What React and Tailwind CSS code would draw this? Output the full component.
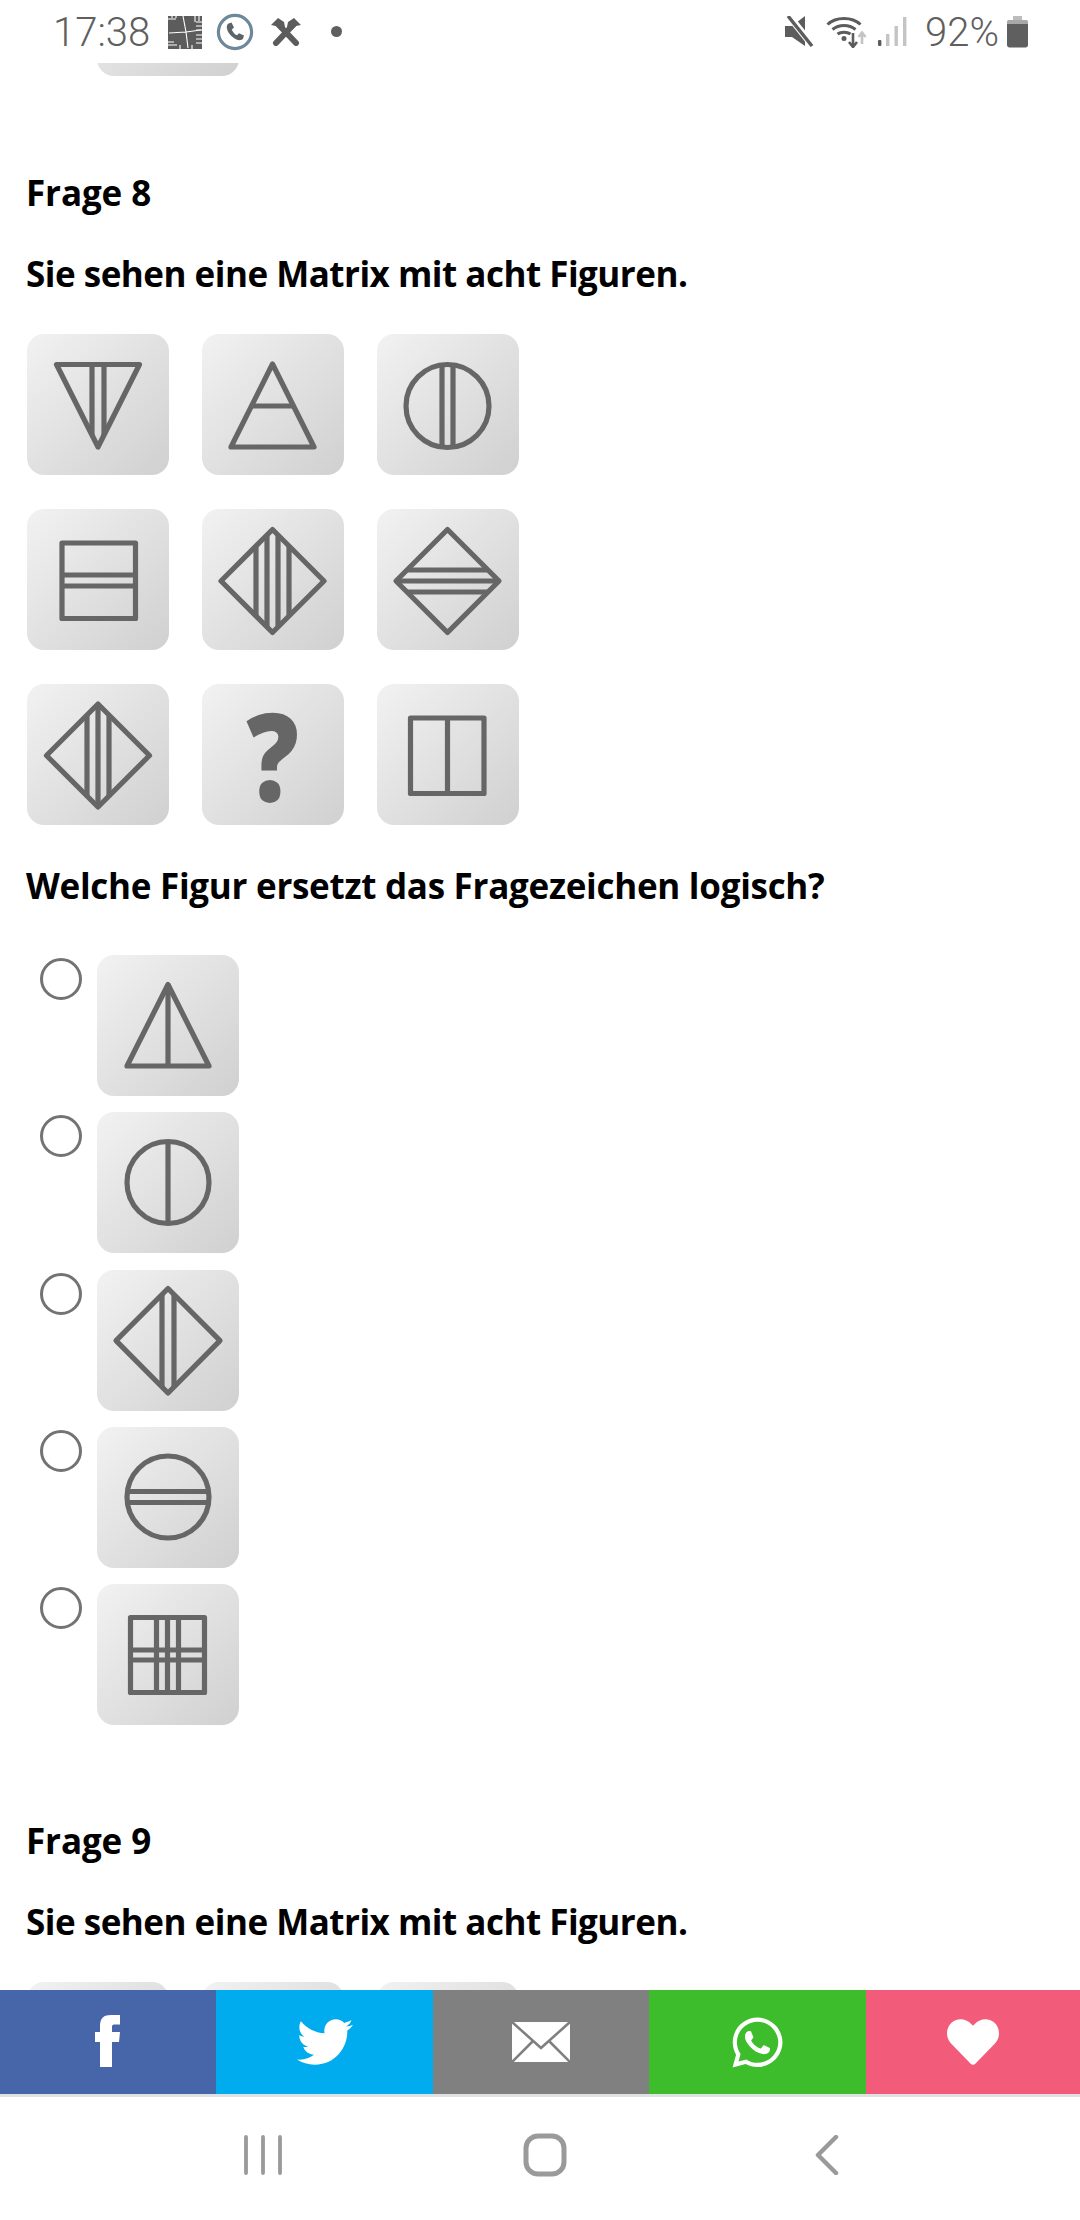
import React from "react";
import { FaTwitter, FaWhatsapp, FaHeart } from "react-icons/fa";

const S = "#666666";

function Fig({ children }) {
  return (
    <svg viewBox="0 0 142 141" className="block w-full h-full" fill="none" stroke={S} strokeWidth="5.2" strokeLinejoin="round" strokeLinecap="butt">
      {children}
    </svg>
  );
}

function Tile({ children }) {
  return (
    <div className="w-[142px] h-[141px] shrink-0 rounded-[17px] bg-linear-to-br from-[#f2f2f2] to-[#d0d0d0]">
      {children}
    </div>
  );
}

const figs = {
  triDown: (
    <Fig>
      <path d="M29.5 30.5H112.5L71 113Z" />
      <path d="M65 30.5V101M77 30.5V101" />
    </Fig>
  ),
  triUpBar: (
    <Fig>
      <path d="M70.5 30L112 113H29Z" />
      <path d="M50 72H91" />
    </Fig>
  ),
  circleTwoV: (
    <Fig>
      <circle cx="70.5" cy="72" r="41.5" />
      <path d="M65 31V113M76 31V113" />
    </Fig>
  ),
  rectTwoH: (
    <Fig>
      <path d="M35 34H108.5V109.5H35Z" />
      <path d="M35 66H108.5M35 77H108.5" />
    </Fig>
  ),
  diamondFourV: (
    <Fig>
      <path d="M70.5 20.5L122 72L70.5 123.5L19 72Z" />
      <path d="M54 37V107M65 26V118M76 26V118M87 37V107" />
    </Fig>
  ),
  diamondThreeH: (
    <Fig>
      <path d="M70.5 20.5L122 72L70.5 123.5L19 72Z" />
      <path d="M30 61H111M19 72H122M30 83H111" />
    </Fig>
  ),
  diamondThreeV: (
    <Fig>
      <path d="M71 20L122.5 71.5L71 123L19.5 71.5Z" />
      <path d="M60 31V112M71 20V123M82 31V112" />
    </Fig>
  ),
  rectOneV: (
    <Fig>
      <path d="M33.5 34H107V109.5H33.5Z" />
      <path d="M70.5 34V109.5" />
    </Fig>
  ),
  triUpV: (
    <Fig>
      <path d="M71 29.5L112 111H30Z" />
      <path d="M71 29.5V111" />
    </Fig>
  ),
  circleOneV: (
    <Fig>
      <circle cx="71" cy="70.5" r="41" />
      <path d="M71 30V111" />
    </Fig>
  ),
  diamondTwoV: (
    <Fig>
      <path d="M71 18.5L123 70.7L71 123L19 70.7Z" />
      <path d="M65 25V117M77 25V117" />
    </Fig>
  ),
  circleTwoH: (
    <Fig>
      <circle cx="71" cy="70" r="41" />
      <path d="M32 64.5H110M32 75.5H110" />
    </Fig>
  ),
  grid: (
    <Fig>
      <path d="M33.5 33.5H107.5V108.5H33.5Z" />
      <path d="M59.5 33.5V108.5M70.5 33.5V108.5M81.5 33.5V108.5M33.5 66H107.5M33.5 76H107.5" />
    </Fig>
  ),
};

function Question() {
  return (
    <div className="w-[142px] h-[141px] flex items-center justify-center">
      <span className="font-['Open_Sans',sans-serif] font-extrabold text-[122px] leading-none text-[#666666] scale-x-[0.85]">?</span>
    </div>
  );
}

function Heading({ children, className = "" }) {
  return (
    <p className={`-ml-[1px] font-['Open_Sans',sans-serif] font-bold text-[35px] leading-[40px] text-black ${className}`}>
      {children}
    </p>
  );
}

function Option({ fig }) {
  return (
    <div className="flex items-start gap-[15px] pl-[40px]">
      <span className="mt-[3px] w-[42px] h-[42px] rounded-full border-[3px] border-[#737373] bg-white shrink-0" />
      <Tile>{fig}</Tile>
    </div>
  );
}

function StatusLeft() {
  return (
    <div className="flex items-center">
      <span className="pt-[2px] font-['Roboto',sans-serif] font-light text-[40px] leading-none text-[#5f5f5f] w-[115px]">17:38</span>
      <svg width="34" height="34" viewBox="0 0 34 34" className="shrink-0">
        <rect x="0" y="1" width="34" height="33" fill="#5c5c5c" />
        <path d="M0 4H8M0 27H6M0 30H9M27 0V7M31 0V6M12 30V34M24 30V34M28 7H34M28 11H34M28 15H34M28 20H34M28 24H34M28 28H34M4 0V3M8 0V3" stroke="#ffffff" strokeWidth="1.1" />
        <path d="M15 1L18 17L20 33M1 18L18 17L33 15" stroke="#ffffff" strokeWidth="1.1" fill="none" />
      </svg>
      <svg width="38" height="38" viewBox="0 0 38 38" className="ml-[14px] shrink-0">
        <circle cx="19" cy="19" r="16.6" fill="none" stroke="#6d8898" strokeWidth="3.2" />
        <path d="M12.5 10.5L15.5 9.5L18 14.5L15.8 16.4C16.6 19 18.6 21.2 21 22.3L23 20.2L28 22.6L27 25.8C25.8 27.4 23 27.6 20.4 26.4C15.6 24.4 11.4 19.4 10.8 14.8C10.6 13 11.2 11.4 12.5 10.5Z" fill="#5c6468" />
      </svg>
      <svg width="30" height="28" viewBox="0 0 30 28" className="ml-[17px] shrink-0">
        <path d="M7 6L25 25M23 6L5 25" stroke="#5c5c5c" strokeWidth="6" strokeLinecap="round" />
        <path d="M0 7L7 0L13 4L14 9L9 12L5 8ZM30 7L23 0L17 4L16 9L21 12L25 8Z" fill="#5c5c5c" />
      </svg>
      <span className="ml-[30px] w-[11px] h-[11px] rounded-full bg-[#5f5f5f] shrink-0" />
    </div>
  );
}

function StatusRight() {
  return (
    <div className="flex items-center">
      <svg width="29" height="31" viewBox="0 0 29 31" className="shrink-0">
        <path d="M0 10H7L20 0V30L7 21H0Z" fill="#5c5c5c" />
        <path d="M4 0L28 30" stroke="#ffffff" strokeWidth="7" />
        <path d="M3 0L27 30" stroke="#5c5c5c" strokeWidth="3.4" />
      </svg>
      <svg width="41" height="32" viewBox="0 0 41 32" className="ml-[12px] shrink-0" fill="none">
        <path d="M1.5 8.5C10 0.5 26 0.5 34.5 8.5" stroke="#5c5c5c" strokeWidth="3" />
        <path d="M6.5 13.5C13 8 23 8 29.5 13.5" stroke="#5c5c5c" strokeWidth="3" />
        <path d="M11.5 18C15 15.5 21 15.5 24.5 18" stroke="#5c5c5c" strokeWidth="3" />
        <circle cx="18" cy="22.5" r="2.5" fill="#5c5c5c" />
        <path d="M27 17V30M23 26L27 31L31 26" stroke="#5c5c5c" strokeWidth="2.6" />
        <path d="M36 28V17M32.5 21L36 16.5L39.5 21" stroke="#c4c4c4" strokeWidth="2.6" />
      </svg>
      <svg width="29" height="30" viewBox="0 0 29 30" className="ml-[11px] shrink-0">
        <rect x="0" y="23" width="3.4" height="6" rx="1" fill="#5c5c5c" />
        <rect x="8" y="17" width="3.4" height="12" fill="#c4c4c4" />
        <rect x="16.5" y="9" width="3.4" height="20" fill="#c4c4c4" />
        <rect x="25" y="0" width="3.4" height="29" fill="#c4c4c4" />
      </svg>
      <span className="ml-[18px] pt-[2px] font-['Roboto',sans-serif] font-light text-[40px] leading-none text-[#5f5f5f] w-[82px]">92%</span>
      <svg width="21" height="32" viewBox="0 0 21 32" className="shrink-0">
        <rect x="6" y="0" width="9" height="5" fill="#bcbcbc" />
        <rect x="0" y="4" width="21" height="5" rx="1.5" fill="#a8a8a8" />
        <path d="M0 8H21V29C21 30.5 20 31.5 18.5 31.5H2.5C1 31.5 0 30.5 0 29Z" fill="#5f5f5f" />
      </svg>
    </div>
  );
}

function Share() {
  return (
    <div className="shrink-0 flex h-[104px]">
      <div className="w-[216px] flex items-center justify-center bg-[#4666a9]">
        <svg width="25" height="52" viewBox="0 0 25 52" fill="#ffffff" className="-mt-[2px] -ml-[2px]">
          <path d="M5 52V27H0V17H5V11C5 3 9 0 16 0H25V9.5H19C17.5 9.5 17 10.5 17 12V17H25L24 27H17V52Z" />
        </svg>
      </div>
      <div className="w-[217px] flex items-center justify-center bg-[#00aced]">
        <FaTwitter size={56} color="#ffffff" />
      </div>
      <div className="w-[216px] flex items-center justify-center bg-[#808080]">
        <svg width="58" height="40" viewBox="0 0 58 40">
          <rect width="58" height="40" fill="#ffffff" />
          <path d="M0 0L29 26L58 0M0 40L21 19M58 40L37 19" fill="none" stroke="#808080" strokeWidth="2.6" />
        </svg>
      </div>
      <div className="w-[217px] flex items-center justify-center bg-[#3dbd2b]">
        <FaWhatsapp size={57} color="#ffffff" />
      </div>
      <div className="w-[214px] flex items-center justify-center bg-[#f25c7a]">
        <FaHeart size={52} color="#ffffff" />
      </div>
    </div>
  );
}

function NavBar() {
  return (
    <div className="h-[126px] shrink-0 bg-white border-t-[3px] border-[#dfe2e2]">
      <div className="grid grid-cols-3 w-[846px] ml-[122px] pt-[38px]">
        <div className="flex justify-center">
          <svg width="40" height="40" viewBox="0 0 40 40" stroke="#9a9a9a" strokeWidth="3.8" strokeLinecap="round">
            <path d="M3 2V38M20 2V38M37 2V38" />
          </svg>
        </div>
        <div className="flex justify-center">
          <svg width="44" height="44" viewBox="0 0 44 44" fill="none" className="-mt-[2px]">
            <rect x="3" y="3" width="38" height="38" rx="12" stroke="#9a9a9a" strokeWidth="5" />
          </svg>
        </div>
        <div className="flex justify-center">
          <svg width="26" height="40" viewBox="0 0 26 40" fill="none" stroke="#9a9a9a" strokeWidth="4.5" strokeLinecap="round" strokeLinejoin="round">
            <path d="M22 2L4 20L22 38" />
          </svg>
        </div>
      </div>
    </div>
  );
}

export default function App() {
  return (
    <div className="w-[1080px] h-[2220px] flex flex-col bg-white overflow-hidden">
      <div className="h-[63px] shrink-0 flex items-center justify-between pl-[53px] pr-[52px] bg-white">
        <StatusLeft />
        <StatusRight />
      </div>

      <main className="flex-1 min-h-0 overflow-hidden px-[27px]">
        <div className="-mt-[128px] ml-[70px]">
          <Tile />
        </div>

        <Heading className="mt-[97px] tracking-[-0.1px]">Frage 8</Heading>
        <Heading className="mt-[41px] tracking-[-0.5px]">Sie sehen eine Matrix mit acht Figuren.</Heading>

        <div className="mt-[40px] grid grid-cols-[142px_142px_142px] gap-x-[33px] gap-y-[34px] w-fit">
          <Tile>{figs.triDown}</Tile>
          <Tile>{figs.triUpBar}</Tile>
          <Tile>{figs.circleTwoV}</Tile>
          <Tile>{figs.rectTwoH}</Tile>
          <Tile>{figs.diamondFourV}</Tile>
          <Tile>{figs.diamondThreeH}</Tile>
          <Tile>{figs.diamondThreeV}</Tile>
          <Tile><Question /></Tile>
          <Tile>{figs.rectOneV}</Tile>
        </div>

        <Heading className="mt-[41px] tracking-[-0.28px]">Welche Figur ersetzt das Fragezeichen logisch?</Heading>

        <div className="mt-[49px] -ml-[27px] flex flex-col gap-[16.3px]">
          <Option fig={figs.triUpV} />
          <Option fig={figs.circleOneV} />
          <Option fig={figs.diamondTwoV} />
          <Option fig={figs.circleTwoH} />
          <Option fig={figs.grid} />
        </div>

        <Heading className="mt-[96px] tracking-[-0.1px]">Frage 9</Heading>
        <Heading className="mt-[41px] tracking-[-0.5px]">Sie sehen eine Matrix mit acht Figuren.</Heading>

        <div className="mt-[40px] flex gap-[33px]">
          <Tile />
          <Tile />
          <Tile />
        </div>
      </main>

      <Share />
      <NavBar />
    </div>
  );
}
